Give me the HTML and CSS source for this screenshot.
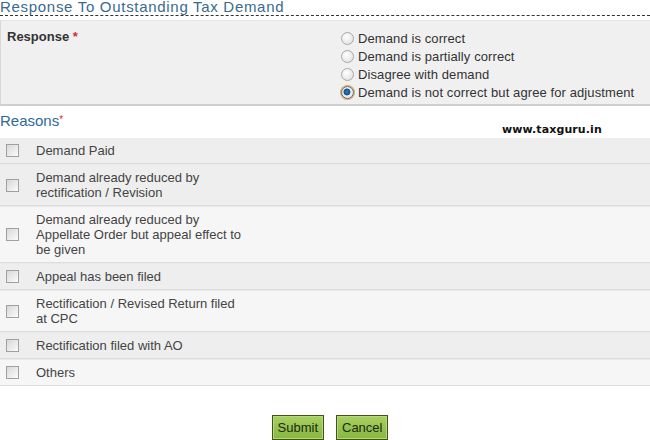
FILE: index.html
```html
<!DOCTYPE html>
<html>
<head>
<meta charset="utf-8">
<link rel="stylesheet" href="styles.css">
</head>
<body>
<div class="page">
  <h2 class="title">Response To Outstanding Tax Demand</h2>
  <div class="response-panel">
    <div class="resp-label">Response <span class="req">*</span></div>
    <div class="radios">
      <label class="radio-row"><span class="radio"></span>Demand is correct</label>
      <label class="radio-row"><span class="radio"></span>Demand is partially correct</label>
      <label class="radio-row"><span class="radio"></span>Disagree with demand</label>
      <label class="radio-row"><span class="radio checked"></span>Demand is not correct but agree for adjustment</label>
    </div>
  </div>
  <div class="reasons-head">
    <span class="reasons-title">Reasons<span class="req-small">*</span></span>
    <span class="watermark">www.taxguru.in</span>
  </div>
  <div class="reasons">
    <div class="row dark"><span class="cb"></span><span class="txt">Demand Paid</span></div>
    <div class="row dark"><span class="cb"></span><span class="txt">Demand already reduced by rectification / Revision</span></div>
    <div class="row light"><span class="cb"></span><span class="txt">Demand already reduced by Appellate Order but appeal effect to be given</span></div>
    <div class="row dark"><span class="cb"></span><span class="txt">Appeal has been filed</span></div>
    <div class="row light"><span class="cb"></span><span class="txt">Rectification / Revised Return filed at CPC</span></div>
    <div class="row dark"><span class="cb"></span><span class="txt">Rectification filed with AO</span></div>
    <div class="row light"><span class="cb"></span><span class="txt">Others</span></div>
  </div>
  <div class="buttons">
    <button class="btn">Submit</button>
    <button class="btn">Cancel</button>
  </div>
</div>
</body>
</html>
```
FILE: styles.css
```css
html, body {
  margin: 0;
  padding: 0;
  background: #ffffff;
  width: 650px;
  height: 440px;
  overflow: hidden;
}
.page {
  font-family: "Liberation Sans", Arial, sans-serif;
  font-size: 13px;
  color: #444444;
  position: relative;
}
.title {
  margin: 0;
  height: 15px;
  line-height: 14px;
  font-size: 15px;
  font-weight: normal;
  letter-spacing: 0.7px;
  color: #3a6a90;
  border-bottom: 1px dashed #333333;
  white-space: nowrap;
  overflow: visible;
}
.response-panel {
  margin-top: 4px;
  height: 86px;
  background: #f0f0f0;
  border-top: 1px solid #e6e6e6;
  border-left: 1px solid #d8d8d8;
  border-bottom: 2px solid #cfcfcf;
  display: flex;
  box-sizing: border-box;
}
.resp-label {
  width: 334px;
  padding: 8px 0 0 6px;
  font-weight: bold;
  color: #333333;
}
.req {
  color: #d03030;
  font-weight: bold;
}
.radios {
  padding-top: 8px;
  display: flex;
  flex-direction: column;
}
.radio-row {
  display: flex;
  align-items: center;
  height: 18px;
  color: #333333;
  white-space: nowrap;
  letter-spacing: 0.1px;
}
.radio {
  width: 11px;
  height: 11px;
  border-radius: 50%;
  border: 1px solid #a8a8a8;
  background: radial-gradient(circle at 40% 35%, #ffffff 0%, #e6e6e6 70%, #cfcfcf 100%);
  margin-right: 4px;
  box-sizing: content-box;
  position: relative;
}
.radio.checked {
  border-color: #5a6c80;
  box-shadow: 0 0 0 1px #e8a54a;
  background: radial-gradient(circle at 45% 45%, #2d7fc0 0%, #1a4f86 35%, #e8eef4 45%, #d6dde4 100%);
}
.reasons-head {
  height: 32px;
  position: relative;
}
.reasons-title {
  display: inline-block;
  margin-top: 6px;
  font-size: 15px;
  color: #2f6a98;
}
.req-small {
  color: #d03030;
  font-size: 10px;
  vertical-align: top;
  position: relative;
  top: 2px;
}
.watermark {
  position: absolute;
  left: 502px;
  top: 17px;
  font-family: "DejaVu Sans", Verdana, sans-serif;
  font-weight: bold;
  font-size: 11px;
  letter-spacing: 0.1px;
  color: #111111;
}
.reasons {
  display: flex;
  flex-direction: column;
}
.row {
  display: flex;
  align-items: center;
  padding: 5px 0;
  border-bottom: 1px solid #dddddd;
  line-height: 15px;
}
.row + .row {
  border-top: 1px solid #e9e9e9;
}
.row.dark {
  background: #eeeeee;
}
.row.light {
  background: #f6f6f6;
}
.cb {
  width: 11px;
  height: 11px;
  margin: 0 17px 0 6px;
  border: 1px solid #a0a0a0;
  background: linear-gradient(135deg, #d8d8d8 0%, #f4f4f4 80%, #ffffff 100%);
  flex: none;
}
.txt {
  width: 208px;
  color: #444444;
}
.buttons {
  display: flex;
  justify-content: center;
  gap: 12px;
  padding: 29px 0 0 10px;
}
.btn {
  font-family: "Liberation Sans", Arial, sans-serif;
  font-size: 13px;
  color: #1b2a0c;
  height: 25px;
  padding: 0 5px;
  border: 1px solid #3f521d;
  background: linear-gradient(#a9d062, #86b640);
  box-shadow: inset 0 0 0 1px #b6da78;
  cursor: pointer;
}
```
